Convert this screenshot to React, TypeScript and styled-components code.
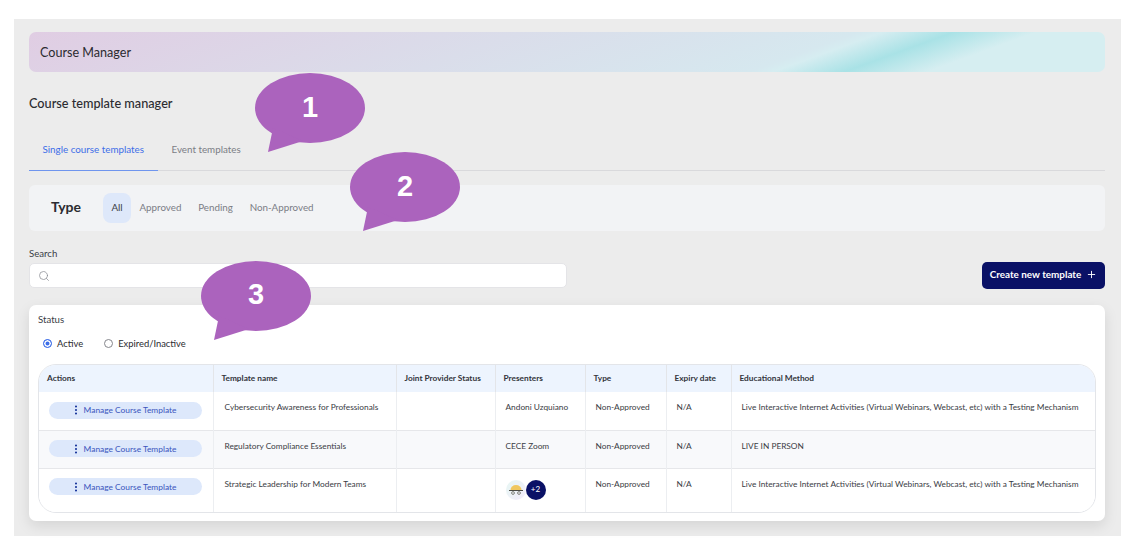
import React from "react";
import styled, { createGlobalStyle } from "styled-components";
import { Search, Plus, EllipsisVertical } from "lucide-react";

const GlobalStyle = createGlobalStyle`
  html, body {
    margin: 0;
    background: #fff;
    overflow: hidden;
  }
  * {
    box-sizing: border-box;
  }
`;

const Page = styled.div`
  position: relative;
  width: 1136px;
  height: 542px;
  padding: 19px 15px 6px 14px;
  font-family: "Lato", "Noto Sans", sans-serif;
  color: #2b2b30;
`;

const Panel = styled.main`
  height: 517px;
  background: #ececec;
  padding: 13px 16px 0 15px;
`;

const Banner = styled.div`
  height: 40px;
  display: flex;
  align-items: center;
  padding-left: 11px;
  border-radius: 7px;
  font-size: 12.6px;
  background: linear-gradient(
    160deg,
    #e0cde3 0%,
    #d6e8ef 70%,
    #d6edf1 72%,
    #a9e2e6 78%,
    #d6eef1 85%,
    #d6eef1 100%
  );
`;

const Title = styled.h1`
  margin: 23px 0 0;
  font-size: 12.7px;
  line-height: 16px;
  font-weight: 500;
`;

const Tabs = styled.div`
  display: flex;
  margin-top: 17px;
  height: 43px;
  border-bottom: 1px solid #d9d9dc;
`;

const Tab = styled.div<{ $active?: boolean }>`
  display: flex;
  align-items: center;
  padding: 0 14px 0 13.5px;
  font-size: 9.8px;
  margin-bottom: -1px;
  color: ${(p) => (p.$active ? "#3d6ee8" : "#7b7d85")};
  border-bottom: 1px solid ${(p) => (p.$active ? "#6f95ee" : "transparent")};
`;

const TypeBar = styled.div`
  display: flex;
  align-items: center;
  height: 46px;
  margin-top: 14px;
  padding-left: 22px;
  background: #f2f3f5;
  border-radius: 6px;
`;

const TypeLabel = styled.span`
  font-size: 14px;
  font-weight: 700;
  width: 52px;
  margin-bottom: 4px;
`;

const Chip = styled.span<{ $active?: boolean }>`
  display: flex;
  align-items: center;
  height: 30px;
  padding: 0 8.4px 3px;
  font-size: 9.8px;
  border-radius: 8px;
  color: ${(p) => (p.$active ? "#3a3d46" : "#7b7d85")};
  background: ${(p) => (p.$active ? "#dee8fa" : "transparent")};
`;

const SearchRow = styled.div`
  display: flex;
  justify-content: space-between;
  align-items: flex-end;
  margin-top: 16px;
`;

const SearchField = styled.div`
  width: 538px;
  margin-bottom: 1px;
`;

const FieldLabel = styled.div`
  font-size: 9.6px;
  line-height: 13px;
  margin-bottom: 3px;
  color: #3a3d46;
`;

const SearchBox = styled.div`
  height: 25px;
  display: flex;
  align-items: center;
  padding-left: 8px;
  background: #fff;
  border: 1px solid #e4e4e7;
  border-radius: 5px;
  color: #8b8d94;
`;

const CreateButton = styled.button`
  display: flex;
  align-items: center;
  justify-content: center;
  gap: 5px;
  width: 123px;
  height: 27px;
  padding: 0 0 3px;
  border: 0;
  border-radius: 5px;
  background: #0a1166;
  color: #fff;
  font-family: inherit;
  font-size: 9.9px;
  font-weight: 700;
`;

const Card = styled.section`
  height: 216px;
  margin-top: 16px;
  padding: 8px 9px 0;
  background: #fff;
  border-radius: 7px;
  box-shadow: 0 5px 14px rgba(0, 0, 0, 0.1);
`;

const StatusLabel = styled.div`
  font-size: 9.6px;
  line-height: 13px;
  color: #3a3d46;
`;

const RadioRow = styled.div`
  display: flex;
  align-items: center;
  height: 14px;
  margin-top: 10px;
  padding-left: 5px;
  gap: 21px;
`;

const RadioOption = styled.label`
  display: flex;
  align-items: center;
  gap: 5px;
  font-size: 9.4px;
  color: #2b2b30;
`;

const RadioDot = styled.span<{ $checked?: boolean }>`
  width: 9px;
  height: 9px;
  border-radius: 50%;
  background: ${(p) => (p.$checked ? "#3d6ee8" : "#fff")};
  border: 1px solid ${(p) => (p.$checked ? "#3d6ee8" : "#85868c")};
  box-shadow: ${(p) => (p.$checked ? "inset 0 0 0 1.5px #fff" : "none")};
`;

const TableWrap = styled.div`
  margin-top: 14px;
  border: 1px solid #e3e5e9;
  border-radius: 18px;
  overflow: hidden;
`;

const Table = styled.table`
  width: 100%;
  border-collapse: collapse;
  table-layout: fixed;
  font-size: 8.3px;
`;

const Th = styled.th`
  height: 27px;
  padding: 0 0 2px 8px;
  text-align: left;
  font-weight: 700;
  background: #edf4fe;
  color: #33353c;
  border-left: 1px solid #e3e5e9;
  &:first-child {
    border-left: 0;
  }
`;

const Tr = styled.tr<{ $height: number; $shaded?: boolean }>`
  height: ${(p) => p.$height}px;
  background: ${(p) => (p.$shaded ? "#f8f9fb" : "#fff")};
  border-top: 1px solid #e6e7ea;
  &:first-child {
    border-top: 0;
  }
`;

const Td = styled.td`
  padding: 10px 4px 0 10px;
  vertical-align: top;
  line-height: 11px;
  color: #3a3c44;
  border-left: 1px solid #eceef1;
  white-space: nowrap;
`;

const NameTd = styled(Td)`
  padding-left: 11px;
`;

const ActionTd = styled.td`
  padding: 9.5px 0 0 10px;
  vertical-align: top;
`;

const ManageButton = styled.div`
  display: flex;
  align-items: center;
  justify-content: center;
  width: 153px;
  height: 17px;
  gap: 2px;
  padding-right: 5px;
  border-radius: 9px;
  background: #dde8fb;
  color: #3a55bd;
  font-size: 8.4px;
  svg {
    color: #1d3a9e;
  }
`;

const Avatars = styled.div`
  display: flex;
  align-items: center;
  margin-top: 1px;
`;

const Avatar = styled.svg`
  width: 20px;
  height: 20px;
`;

const MoreBadge = styled.span`
  display: flex;
  align-items: center;
  justify-content: center;
  width: 20px;
  height: 20px;
  border-radius: 50%;
  background: #0a1166;
  color: #fff;
  font-size: 8px;
`;

const Callout = styled.svg<{ $left: number; $top: number }>`
  position: absolute;
  left: ${(p) => p.$left}px;
  top: ${(p) => p.$top}px;
  width: 110px;
  height: 80px;
`;

const CalloutNumber = styled.span<{ $left: number; $top: number }>`
  position: absolute;
  left: ${(p) => p.$left}px;
  top: ${(p) => p.$top}px;
  width: 110px;
  text-align: center;
  font-family: "Liberation Sans", Arial, sans-serif;
  font-size: 29px;
  line-height: 34px;
  font-weight: 700;
  color: #fff;
`;

const columns = [
  { label: "Actions", width: 174 },
  { label: "Template name", width: 183 },
  { label: "Joint Provider Status", width: 99 },
  { label: "Presenters", width: 90 },
  { label: "Type", width: 81 },
  { label: "Expiry date", width: 65 },
  { label: "Educational Method" },
];

const webinar =
  "Live Interactive Internet Activities (Virtual Webinars, Webcast, etc) with a Testing Mechanism";

const rows = [
  { name: "Cybersecurity Awareness for Professionals", presenter: "Andoni Uzquiano", method: webinar, height: 38 },
  { name: "Regulatory Compliance Essentials", presenter: "CECE Zoom", method: "LIVE IN PERSON", height: 38, shaded: true },
  { name: "Strategic Leadership for Modern Teams", method: webinar, height: 44 },
];

const callouts = [
  { left: 255, top: 73, label: "1", numberTop: 90 },
  { left: 350, top: 152, label: "2", numberTop: 169 },
  { left: 201, top: 261, label: "3", numberTop: 277 },
];

function PresenterAvatars() {
  return (
    <Avatars>
      <Avatar viewBox="0 0 20 20">
        <defs>
          <linearGradient id="avatarBg" x1="0" y1="0" x2="1" y2="1">
            <stop offset="0" stopColor="#e6f7f3" />
            <stop offset="1" stopColor="#f3ecfb" />
          </linearGradient>
        </defs>
        <circle cx="10" cy="10" r="10" fill="url(#avatarBg)" />
        <path d="M4.5 10a5.5 5 0 0 1 11 0z" fill="#f0c75e" />
        <path d="M3 10.5h14" stroke="#4a4a44" strokeWidth="1.2" />
        <circle cx="7" cy="13" r="1.4" fill="none" stroke="#6a6a60" strokeWidth="0.8" />
        <circle cx="13" cy="13" r="1.4" fill="none" stroke="#6a6a60" strokeWidth="0.8" />
      </Avatar>
      <MoreBadge>+2</MoreBadge>
    </Avatars>
  );
}

export default function App() {
  return (
    <Page>
      <GlobalStyle />
      <Panel>
        <Banner>Course Manager</Banner>
        <Title>Course template manager</Title>
        <Tabs>
          <Tab $active>Single course templates</Tab>
          <Tab>Event templates</Tab>
        </Tabs>
        <TypeBar>
          <TypeLabel>Type</TypeLabel>
          <Chip $active>All</Chip>
          <Chip>Approved</Chip>
          <Chip>Pending</Chip>
          <Chip>Non-Approved</Chip>
        </TypeBar>
        <SearchRow>
          <SearchField>
            <FieldLabel>Search</FieldLabel>
            <SearchBox>
              <Search size={12} strokeWidth={1.5} />
            </SearchBox>
          </SearchField>
          <CreateButton>
            Create new template <Plus size={11} strokeWidth={2} />
          </CreateButton>
        </SearchRow>
        <Card>
          <StatusLabel>Status</StatusLabel>
          <RadioRow>
            <RadioOption>
              <RadioDot $checked />
              Active
            </RadioOption>
            <RadioOption>
              <RadioDot />
              Expired/Inactive
            </RadioOption>
          </RadioRow>
          <TableWrap>
            <Table>
              <colgroup>
                {columns.map((c) => (
                  <col key={c.label} style={c.width ? { width: c.width } : undefined} />
                ))}
              </colgroup>
              <thead>
                <tr>
                  {columns.map((c) => (
                    <Th key={c.label}>{c.label}</Th>
                  ))}
                </tr>
              </thead>
              <tbody>
                {rows.map((row) => (
                  <Tr key={row.name} $height={row.height} $shaded={row.shaded}>
                    <ActionTd>
                      <ManageButton>
                        <EllipsisVertical size={12} strokeWidth={2.4} />
                        Manage Course Template
                      </ManageButton>
                    </ActionTd>
                    <NameTd>{row.name}</NameTd>
                    <Td />
                    <Td>{row.presenter ?? <PresenterAvatars />}</Td>
                    <Td>Non-Approved</Td>
                    <Td>N/A</Td>
                    <Td>{row.method}</Td>
                  </Tr>
                ))}
              </tbody>
            </Table>
          </TableWrap>
        </Card>
      </Panel>
      {callouts.map((c) => (
        <React.Fragment key={c.label}>
          <Callout $left={c.left} $top={c.top} viewBox="0 0 110 80">
            <ellipse cx="55" cy="35" rx="55" ry="35" fill="#ab63bd" />
            <path d="M18 55 L13 79 L48 68 Z" fill="#ab63bd" />
          </Callout>
          <CalloutNumber $left={c.left} $top={c.numberTop}>
            {c.label}
          </CalloutNumber>
        </React.Fragment>
      ))}
    </Page>
  );
}
